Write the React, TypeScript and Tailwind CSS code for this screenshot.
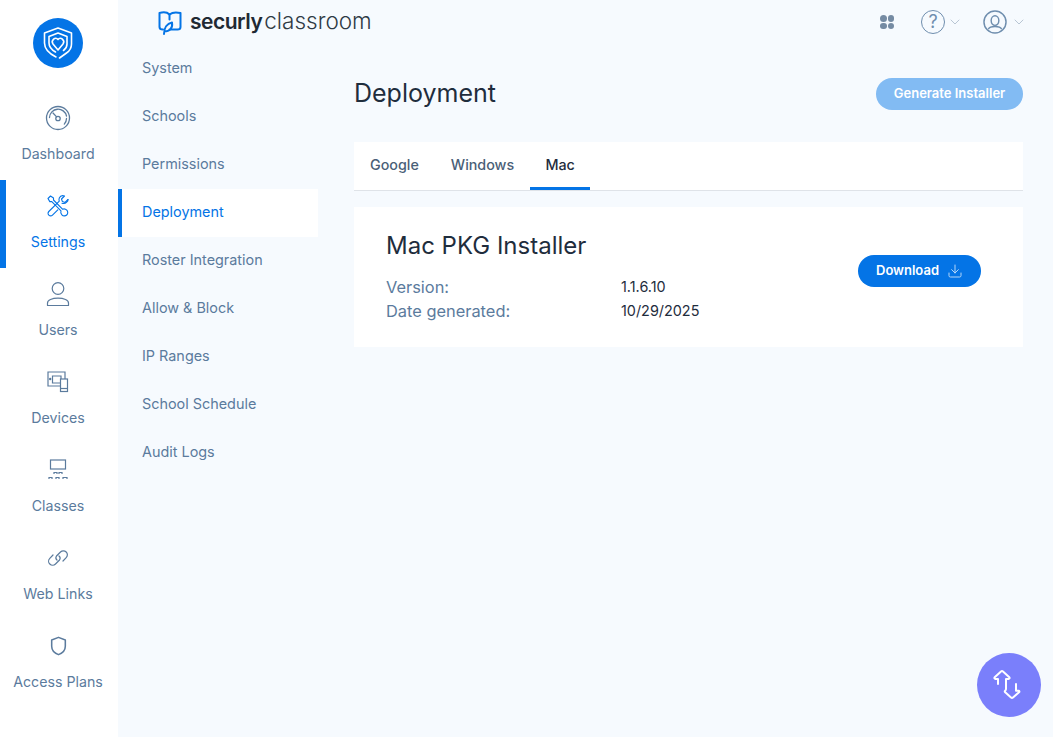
import { ChevronDown, Download } from "lucide-react";
import type { ReactNode } from "react";

const DashboardIcon = () => (
  <svg width="26" height="26" viewBox="0 0 26 26" fill="none" stroke="currentColor" strokeWidth="1.3" strokeLinecap="round">
    <circle cx="13" cy="13" r="11.5" />
    <path d="M4.5 12.5a8.6 8.6 0 0 1 17 -1.5" />
    <path d="M8 8l3.4 3.6" />
    <circle cx="13" cy="13.5" r="2.2" />
    <path d="M21.5 13.5a8.5 8.5 0 0 1 -2.2 5.6" />
  </svg>
);

const SettingsIcon = () => (
  <svg width="24" height="24" viewBox="0 0 24 24" fill="none" stroke="currentColor" strokeWidth="1.1" strokeLinejoin="round" strokeLinecap="round">
    <path d="M2 4.5l2.5-2.5 3 2v2l9 9.2c1.5-.6 3.2-.2 4.3 1 1.3 1.4 1.2 3.6-.1 4.8-1.4 1.3-3.5 1.2-4.8-.2-1.1-1.1-1.4-2.6-.9-4L5.8 7.6h-2z" />
    <path d="M22 5.5l-3 3-2.6-.9-.9-2.6 3-3c-2.2-.7-4.4.2-5.2 2-.5 1.1-.4 2.2 0 3.2L2.8 17.5c-1 1-1 2.6 0 3.6s2.7 1 3.7 0l5.3-5.3" />
    <path d="M16 9.2c1.6.6 3.5.2 4.7-1 .9-.8 1.4-1.8 1.3-2.7" />
  </svg>
);

const UsersIcon = () => (
  <svg width="24" height="26" viewBox="0 0 24 26" fill="none" stroke="currentColor" strokeWidth="1.2">
    <circle cx="12" cy="7.5" r="5.8" />
    <path d="M1.5 24.5V22c0-2.800 4.500-4.800 10.500-4.800s10.500 2 10.500 4.800v2.500z" strokeLinejoin="round" />
  </svg>
);

const DevicesIcon = () => (
  <svg width="22" height="22" viewBox="0 0 22 22" fill="none" stroke="currentColor" strokeWidth="1.2">
    <path d="M14 15H1V1h17v7" />
    <path d="M13 12H5.5V5H14v3" />
    <circle cx="3.2" cy="8" r=".6" />
    <rect x="13.5" y="8" width="7" height="12.5" />
    <path d="M13.5 17.5h7" />
  </svg>
);

const ClassesIcon = () => (
  <svg width="20" height="22" viewBox="0 0 20 22" fill="none" stroke="currentColor" strokeWidth="1.2">
    <rect x="2.5" y="1" width="15" height="9" />
    <path d="M6 15v-1.500h3V15M11 15v-1.500h3V15M1 20v-1.500h3V20M8 20v-1.500h3V20M15 20v-1.500h4V20" />
  </svg>
);

const LinkIcon = () => (
  <svg width="22" height="22" viewBox="0 0 22 22" fill="none" stroke="currentColor" strokeWidth="1.2" strokeLinecap="round">
    <path d="M10 13a3 3 0 0 1-.5-4l4-4a4 4 0 0 1 5.700 5.700L16 14" />
    <path d="M12 9a3 3 0 0 1 .5 4l-4 4a4 4 0 0 1-5.700-5.700L6 8" />
  </svg>
);

const ShieldIcon = () => (
  <svg width="17" height="20" viewBox="0 0 18 22" fill="none" stroke="currentColor" strokeWidth="1.7" strokeLinejoin="round">
    <path d="M9 1.500l7.500 2.800v7c0 4.500-3.200 7.600-7.500 9.200-4.300-1.600-7.500-4.700-7.500-9.200v-7z" />
  </svg>
);

const navItems: { label: string; icon: ReactNode; active?: boolean }[] = [
  { label: "Dashboard", icon: <DashboardIcon /> },
  { label: "Settings", icon: <SettingsIcon />, active: true },
  { label: "Users", icon: <UsersIcon /> },
  { label: "Devices", icon: <DevicesIcon /> },
  { label: "Classes", icon: <ClassesIcon /> },
  { label: "Web Links", icon: <LinkIcon /> },
  { label: "Access Plans", icon: <ShieldIcon /> },
];

const subItems = ["System", "Schools", "Permissions", "Deployment", "Roster Integration", "Allow & Block", "IP Ranges", "School Schedule", "Audit Logs"];

const App = () => {
  return (
    <div className="relative flex h-[737px] w-[1053px] overflow-hidden bg-[#f6fafe] font-['Inter',sans-serif]">
      {/* Main nav */}
      <aside className="flex w-[118px] shrink-0 flex-col bg-white">
        <div className="flex h-[92px] items-start justify-center pr-[2px] pt-[18px]">
          <div className="flex h-[50px] w-[50px] items-center justify-center rounded-full bg-[#0474e6]">
            <svg width="30" height="34" viewBox="0 0 30 34" fill="none" stroke="white" strokeWidth="1.6" strokeLinecap="round" strokeLinejoin="round">
              <path d="M13 31C8 28.500 1.500 24 1.500 17V7L15 2l13.500 5v11c0 4-2 7-5 9l-7 5" />
              <path d="M15 7l9 3.500V18c0 3-1.500 5-3.500 6.500M15 7l-9 3.500V17c0 4 3 7 6.500 9" />
              <path d="M15 24l-5-6c-2.500-3.500 2.500-8 5-4.500 2.500-3.500 7.500 1 5 4.500z" />
            </svg>
          </div>
        </div>
        {navItems.map((item) => (
          <div
            key={item.label}
            className={`flex h-[88px] flex-col items-center border-l-[6px] pr-[8px] ${item.active ? "border-[#0474e6] text-[#0474e6]" : "border-transparent text-[#5b7b9d]"}`}
          >
            <div className="mt-[12px] flex h-[28px] items-center justify-center">{item.icon}</div>
            <span className="mt-[12px] whitespace-nowrap text-[14.2px] leading-[20px]">{item.label}</span>
          </div>
        ))}
      </aside>

      <div className="flex min-w-0 flex-1 flex-col">
        {/* Top header */}
        <header className="flex h-[45px] shrink-0 items-center justify-between pb-[1px] pl-[40px] pr-[26px]">
          <div className="flex items-center">
            <svg width="25" height="25" viewBox="0 0 25 25" fill="none" stroke="#0474e6" strokeWidth="2" strokeLinejoin="round" strokeLinecap="round">
              <path d="M5 19.500c-2 0-3.500-1-3.500-2.500V3c3.500-1 7.500-1 10 1.500 3-2.500 7-2.500 11-1.500v14c0 1.500-1 2.500-3 2.500h-8" />
              <path d="M11.500 4.500v5" />
              <path d="M6 24c0-6 3-10.500 8-11.500 1 6-3 9.500-7 8.500" />
            </svg>
            <span className="ml-[7px] pb-[2px] text-[21px] font-semibold leading-none tracking-[-0.5px] text-[#1f2933]">securly</span>
            <span className="ml-[2px] pb-[2px] text-[22.5px] font-light leading-none text-[#2f3a45]">classroom</span>
          </div>
          <div className="flex items-center">
            <div className="grid grid-cols-2 gap-[1px]">
              <span className="h-[6.500px] w-[6.500px] rounded-full bg-[#758ba3]" />
              <span className="h-[6.500px] w-[6.500px] rounded-full bg-[#758ba3]" />
              <span className="h-[6.500px] w-[6.500px] rounded-full bg-[#758ba3]" />
              <span className="h-[6.500px] w-[6.500px] rounded-full bg-[#758ba3]" />
            </div>
            <div className="ml-[27px] flex h-[24px] w-[24px] items-center justify-center rounded-full border-[1.5px] border-[#6f8eae] text-[18px] leading-none text-[#6f8eae]">?</div>
            <ChevronDown className="ml-[2px] text-[#a9b9c9]" size={16} strokeWidth={1.2} />
            <svg className="ml-[20px]" width="24" height="24" viewBox="0 0 25 25" fill="none" stroke="#6f8eae" strokeWidth="1.5">
              <circle cx="12.5" cy="12.5" r="11.5" />
              <ellipse cx="12.5" cy="11" rx="4" ry="5" />
              <path d="M5.500 20c1-2 3-2.800 7-2.800s6 .8 7 2.800" />
            </svg>
            <ChevronDown className="ml-[4px] text-[#a9b9c9]" size={16} strokeWidth={1.2} />
          </div>
        </header>

        <div className="flex min-h-0 flex-1">
          {/* Settings sub nav */}
          <nav className="flex w-[200px] shrink-0 flex-col">
            {subItems.map((label) => (
              <div
                key={label}
                className={`flex h-[48px] items-center border-l-[4px] pb-[2px] pl-[20px] text-[14.4px] ${label === "Deployment" ? "border-[#0474e6] bg-white text-[#0474e6]" : "border-transparent text-[#5b7b9d]"}`}
              >
                {label}
              </div>
            ))}
          </nav>

          {/* Content */}
          <main className="ml-[36px] mr-[30px] flex min-w-0 flex-1 flex-col">
            <div className="flex h-[97px] items-start justify-between pt-[33px]">
              <h1 className="text-[25px] font-normal leading-[30px] text-[#1f2d3d]">Deployment</h1>
              <button className="h-[32px] w-[147px] rounded-full bg-[#82bbf3] text-[13px] font-semibold text-white">Generate Installer</button>
            </div>

            <div className="flex h-[49px] items-stretch border-b border-[#dfe3e8] bg-white text-[14.3px] font-medium">
              <div className="flex items-center px-[16px] pb-[2px] text-[#4a5f78]">Google</div>
              <div className="flex items-center px-[16px] pb-[2px] text-[#4a5f78]">Windows</div>
              <div className="flex w-[60px] items-center justify-center border-b-[3px] border-[#0474e6] pt-[1px] text-[#1f2d3d]">Mac</div>
            </div>

            <section className="mt-[16px] flex h-[140px] justify-between bg-white pl-[32px] pr-[42px]">
              <div className="pt-[24px]">
                <h2 className="text-[24px] font-normal leading-[30px] text-[#1f2d3d]">Mac PKG Installer</h2>
                <div className="mt-[14px] grid grid-cols-[235px_auto] text-[16.4px] leading-[24px]">
                  <span className="text-[#5b7b9d]">Version:</span>
                  <span className="text-[14.4px] text-[#1f2d3d]">1.1.6.10</span>
                  <span className="text-[#5b7b9d]">Date generated:</span>
                  <span className="text-[14.4px] text-[#1f2d3d]">10/29/2025</span>
                </div>
              </div>
              <button className="mt-[48px] flex h-[32px] w-[123px] items-center justify-center gap-[8px] rounded-full bg-[#0474e6] text-[13px] font-semibold text-white">
                Download
                <Download size={16} strokeWidth={1.5} className="text-[#b5d6f7]" />
              </button>
            </section>
          </main>
        </div>
      </div>

      {/* Floating switch button */}
      <button className="absolute bottom-[20px] right-[12px] flex h-[64px] w-[64px] items-center justify-center rounded-full bg-[#7a7ffb]">
        <svg width="48" height="46" viewBox="0 0 48 46" fill="none" stroke="white" strokeWidth="2" strokeLinejoin="round" strokeLinecap="round">
          <path d="M13 22v-5H10.500a1 1 0 0 1-.8-1.700L16 9.500a1.500 1.500 0 0 1 2 0l6.300 5.800a1 1 0 0 1-.8 1.700H21v10a2 2 0 0 1-1 1.800 1 1 0 0 0 .2 1.500L26 35.500a1.500 1.500 0 0 0 2 0l6.300-5.500a.8.8 0 0 0-.6-1.200H31V22" />
        </svg>
      </button>
    </div>
  );
};

export default App;
